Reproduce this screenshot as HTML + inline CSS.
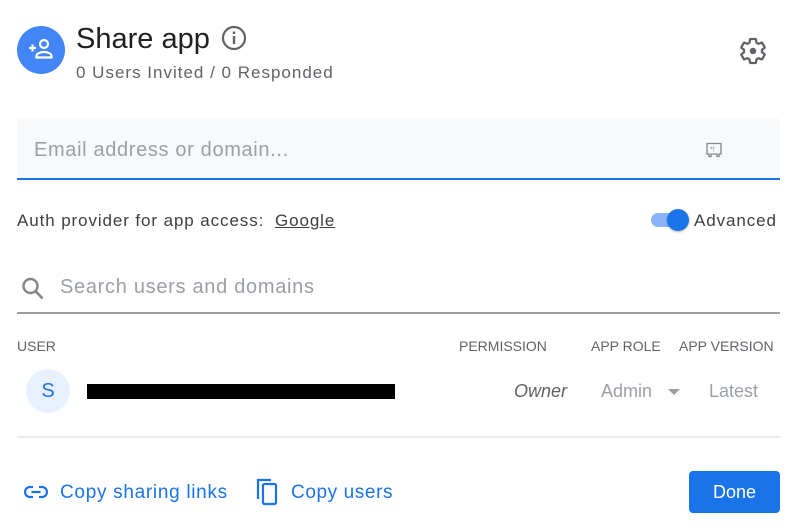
<!DOCTYPE html>
<html><head><meta charset="utf-8"><style>
*{margin:0;padding:0;box-sizing:border-box}
body{width:800px;height:532px;background:#fff;font-family:"Liberation Sans",Arial,sans-serif;position:relative;overflow:hidden;color:#202124}
.a{position:absolute;white-space:nowrap}
</style></head><body>
<div class="a" style="left:17px;top:26px;width:48px;height:48px;border-radius:50%;background:#4285f4"></div>
<svg class="a" style="left:27px;top:37px" width="28" height="24" viewBox="0 0 28 24">
<path d="M2 11h7M5.5 7.5v7" stroke="#fff" stroke-width="2.2"/>
<circle cx="17" cy="7" r="4" fill="none" stroke="#fff" stroke-width="2.2"/>
<path d="M9.5 20.5v-1.5c0-2.5 4-4 7.5-4s7.5 1.5 7.5 4v1.5z" fill="none" stroke="#fff" stroke-width="2.2"/>
</svg>
<div class="a" style="left:76px;top:23px;font-size:29px;color:#202124">Share app</div>
<svg class="a" style="left:221px;top:25px" width="26" height="26" viewBox="0 0 26 26"><circle cx="13" cy="13" r="11" fill="none" stroke="#5f6368" stroke-width="2.2"/><rect x="11.8" y="11" width="2.4" height="8" fill="#5f6368"/><rect x="11.8" y="6.5" width="2.4" height="2.5" fill="#5f6368"/></svg>
<div class="a" style="left:76px;top:63px;font-size:17px;color:#5f6368;letter-spacing:1px">0 Users Invited / 0 Responded</div>
<svg class="a" style="left:738px;top:36px" width="30" height="30" viewBox="0 0 24 24"><path fill="none" stroke="#5f6368" stroke-width="1.8" stroke-linejoin="round" d="M19.14 12.94c.04-.3.06-.61.06-.94 0-.32-.02-.64-.07-.94l2.03-1.58a.49.49 0 0 0 .12-.61l-1.92-3.32a.488.488 0 0 0-.59-.22l-2.39.96c-.5-.38-1.03-.7-1.620-.94l-.36-2.54a.484.484 0 0 0-.48-.41h-3.84c-.24 0-.43.17-.47.41l-.36 2.54c-.59.24-1.13.57-1.62.94l-2.39-.96c-.22-.08-.47 0-.59.22L2.74 8.87c-.12.21-.08.47.12.61l2.03 1.58c-.05.3-.09.63-.09.94s.02.64.07.94l-2.03 1.58a.49.49 0 0 0-.12.61l1.92 3.32c.12.22.37.29.59.22l2.39-.96c.5.38 1.03.7 1.62.94l.36 2.54c.05.24.24.41.48.41h3.84c.24 0 .44-.17.47-.41l.36-2.54c.59-.24 1.13-.56 1.62-.94l2.39.96c.22.08.47 0 .59-.22l1.92-3.32c.12-.22.07-.47-.12-.61l-2.01-1.58z"/><circle cx="12" cy="12" r="2.6" fill="#5f6368"/></svg>
<div class="a" style="left:17px;top:118px;width:763px;height:62px;background:#f8f9fa;border-radius:4px 4px 0 0;border-bottom:2px solid #1a73e8"></div>
<div class="a" style="left:34px;top:139px;font-size:20px;color:#9aa0a6;letter-spacing:0.65px">Email address or domain...</div>
<svg class="a" style="left:705px;top:141px" width="18" height="18" viewBox="0 0 18 18"><path d="M2 2.5h14v10.5h-2v2.5h-2v-2.5H6v2.5H4v-2.5H2z" fill="none" stroke="#80868b" stroke-width="1.3"/><text x="5" y="10.5" font-size="7" fill="#80868b" font-family="Liberation Sans">*!</text></svg>
<div class="a" style="left:17px;top:211px;font-size:17px;color:#3c4043;letter-spacing:0.9px">Auth provider for app access:</div>
<div class="a" style="left:275px;top:211px;font-size:17px;color:#3c4043;text-decoration:underline;letter-spacing:0.9px">Google</div>
<div class="a" style="left:651px;top:213px;width:34px;height:14px;border-radius:7px;background:#8ab4f8"></div>
<div class="a" style="left:667px;top:209px;width:22px;height:22px;border-radius:50%;background:#1a73e8;box-shadow:0 1px 2px rgba(0,0,0,.3)"></div>
<div class="a" style="left:694px;top:211px;font-size:17px;color:#3c4043;letter-spacing:0.9px">Advanced</div>
<svg class="a" style="left:21px;top:276px" width="24" height="26" viewBox="0 0 24 26"><circle cx="9.5" cy="10" r="7" fill="none" stroke="#80868b" stroke-width="2.4"/><path d="M14.5 15l7 7.5" stroke="#80868b" stroke-width="2.6"/></svg>
<div class="a" style="left:60px;top:276px;font-size:20px;color:#9aa0a6;letter-spacing:0.7px">Search users and domains</div>
<div class="a" style="left:17px;top:312px;width:763px;height:2px;background:#9e9e9e"></div>
<div class="a" style="left:17px;top:338px;font-size:14px;color:#5f6368">USER</div>
<div class="a" style="left:459px;top:338px;font-size:14px;color:#5f6368">PERMISSION</div>
<div class="a" style="left:591px;top:338px;font-size:14px;color:#5f6368">APP ROLE</div>
<div class="a" style="left:679px;top:338px;font-size:14px;color:#5f6368">APP VERSION</div>
<div class="a" style="left:26px;top:369px;width:44px;height:44px;border-radius:50%;background:#e8f0fe;color:#1a73e8;font-size:20px;text-align:center;line-height:44px">S</div>
<div class="a" style="left:87px;top:384px;width:308px;height:15px;background:#000"></div>
<div class="a" style="left:514px;top:381px;font-size:18px;color:#5f6368;font-style:italic">Owner</div>
<div class="a" style="left:601px;top:381px;font-size:18px;color:#9aa0a6">Admin</div>
<div class="a" style="left:668px;top:389px;width:0;height:0;border-left:6px solid transparent;border-right:6px solid transparent;border-top:6px solid #9aa0a6"></div>
<div class="a" style="left:709px;top:381px;font-size:18px;color:#9aa0a6">Latest</div>
<div class="a" style="left:17px;top:436px;width:763px;height:2px;background:#e8eaed"></div>
<svg class="a" style="left:24px;top:485px" width="24" height="14" viewBox="0 0 24 14"><path d="M9 2H6a5 5 0 0 0 0 10h3M15 2h3a5 5 0 0 1 0 10h-3M7.5 7h9" fill="none" stroke="#1a73e8" stroke-width="2.2"/></svg>
<div class="a" style="left:60px;top:482px;font-size:19px;color:#1a73e8;letter-spacing:0.7px">Copy sharing links</div>
<svg class="a" style="left:255px;top:478px" width="26" height="28" viewBox="0 0 26 28"><path d="M3 21V2h13" fill="none" stroke="#1a73e8" stroke-width="2.2"/><rect x="8" y="6" width="13" height="20" rx="1.5" fill="none" stroke="#1a73e8" stroke-width="2.2"/></svg>
<div class="a" style="left:291px;top:482px;font-size:19px;color:#1a73e8;letter-spacing:0.6px">Copy users</div>
<div class="a" style="left:689px;top:471px;width:91px;height:42px;background:#1a73e8;border-radius:4px;color:#fff;font-size:18px;text-align:center;line-height:42px">Done</div>
</body></html>
